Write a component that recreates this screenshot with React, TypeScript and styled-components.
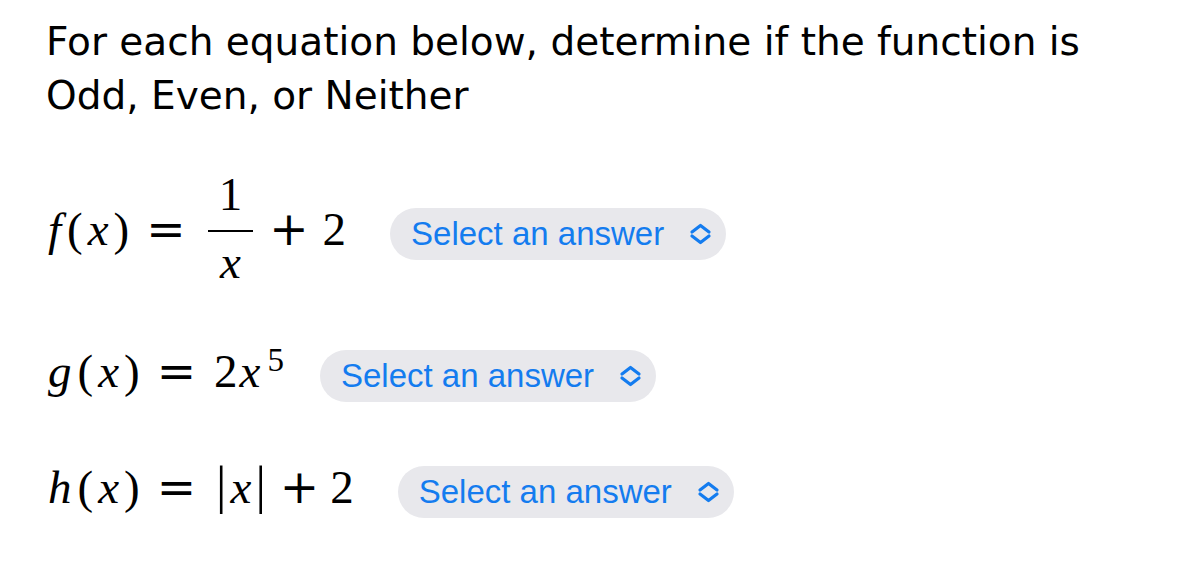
import React from 'react';
import styled, { createGlobalStyle } from 'styled-components';

const GlobalStyle = createGlobalStyle`
  html, body {
    margin: 0;
    background: #ffffff;
  }
`;

const Page = styled.div`
  padding: 15px 46px 0;
  color: #000;
`;

const Prompt = styled.p`
  margin: 0;
  font-family: "DejaVu Sans", sans-serif;
  font-size: 39px;
  line-height: 54px;
`;

const Rows = styled.div`
  display: flex;
  flex-direction: column;
  gap: 57px;
  margin-top: 48px;
`;

const Row = styled.div<{ $gap: number }>`
  display: flex;
  align-items: baseline;
  gap: ${(p) => p.$gap}px;
`;

const Formula = styled.span`
  display: block;
  padding-left: 2px;
  font-family: "Liberation Serif", "DejaVu Serif", serif;
  font-size: 47px;
  line-height: 56px;
  white-space: nowrap;
`;

const Var = styled.i<{ $l?: number; $r?: number }>`
  font-style: italic;
  margin: 0 ${(p) => p.$r ?? 5}px 0 ${(p) => p.$l ?? 5}px;
`;

const Op = styled.span<{ $l: number; $r: number }>`
  font-family: "DejaVu Serif", serif;
  font-size: 47px;
  margin: 0 ${(p) => p.$r}px 0 ${(p) => p.$l}px;
`;

const Fraction = styled.span`
  display: inline-flex;
  flex-direction: column;
  align-items: center;
  vertical-align: 35px;
  line-height: 1;
`;

const Numerator = styled.span`
  padding: 0 11px 12px;
  border-bottom: 2px solid #000;
`;

const Denominator = styled.span`
  padding: 7px 11px 0;
  font-style: italic;
`;

const Sup = styled.span`
  font-size: 33px;
  line-height: 0;
  vertical-align: 16px;
  margin-left: 4px;
`;

const Bar = styled.span`
  font-size: 52px;
  line-height: 0;
  margin: 0 2px;
`;

const Picker = styled.button`
  display: inline-flex;
  align-items: center;
  gap: 25px;
  height: 52px;
  padding: 0 14px 0 21px;
  border: none;
  border-radius: 26px;
  background: #e8e8ec;
  color: #147cef;
  font-family: "Liberation Sans", Arial, sans-serif;
  font-size: 33px;
  cursor: pointer;
`;

const Chevrons = () => (
  <svg width="23" height="22" viewBox="0 0 23 22" fill="none">
    <path d="M3 9 L11.5 2.5 L20 9" stroke="#147cef" strokeWidth="3.2" strokeLinecap="round" strokeLinejoin="round" />
    <path d="M3 13 L11.5 19.5 L20 13" stroke="#147cef" strokeWidth="3.2" strokeLinecap="round" strokeLinejoin="round" />
  </svg>
);

const AnswerPicker = () => (
  <Picker type="button">
    <span>Select an answer</span>
    <Chevrons />
  </Picker>
);

export default function App() {
  return (
    <>
      <GlobalStyle />
      <Page>
        <Prompt>
          For each equation below, determine if the function is
          <br />
          Odd, Even, or Neither
        </Prompt>
        <Rows>
          <Row $gap={44}>
            <Formula>
              <Var $l={0} $r={6}>f</Var>(<Var>x</Var>)
              <Op $l={17} $r={22}>=</Op>
              <Fraction>
                <Numerator>1</Numerator>
                <Denominator>x</Denominator>
              </Fraction>
              <Op $l={16} $r={14}>+</Op>2
            </Formula>
            <AnswerPicker />
          </Row>
          <Row $gap={36}>
            <Formula>
              <Var $l={0} $r={6}>g</Var>(<Var>x</Var>)
              <Op $l={17} $r={18}>=</Op>
              2<Var $l={2} $r={3}>x</Var>
              <Sup>5</Sup>
            </Formula>
            <AnswerPicker />
          </Row>
          <Row $gap={44}>
            <Formula>
              <Var $l={0} $r={6}>h</Var>(<Var>x</Var>)
              <Op $l={17} $r={18}>=</Op>
              <Bar>|</Bar>
              <Var $l={2} $r={2}>x</Var>
              <Bar>|</Bar>
              <Op $l={12} $r={11}>+</Op>2
            </Formula>
            <AnswerPicker />
          </Row>
        </Rows>
      </Page>
    </>
  );
}
